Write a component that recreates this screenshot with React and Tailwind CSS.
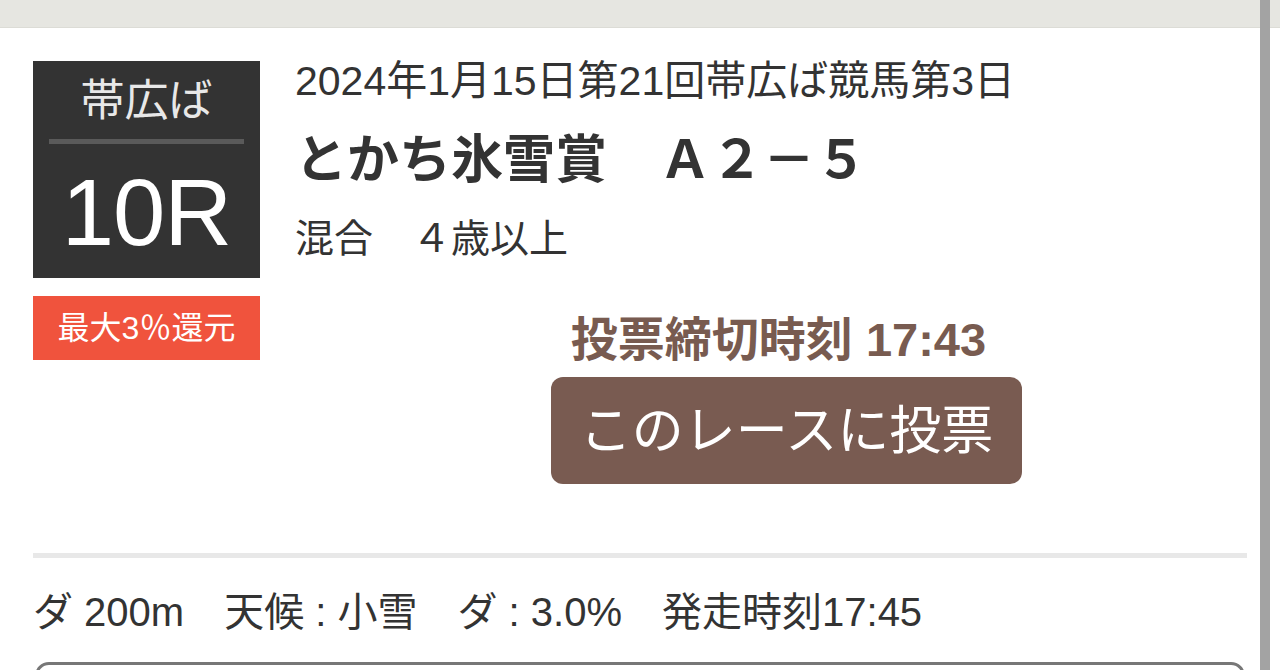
import React from "react";

const FONT = { fontFamily: '"Liberation Sans", "Noto Sans CJK JP", sans-serif' };

export default function App() {
  return (
    <div className="w-[1280px] h-[670px] overflow-hidden flex bg-white text-[#333]" style={FONT}>
      <div className="w-[1260px] flex flex-col">
        <div className="h-[28px] bg-[#e6e6e1] border-b border-[#dcdcd6] shrink-0" />
        <div className="pl-[33px] pr-[13px] flex flex-col">
          <div className="flex pt-[33px]">
            <div className="w-[227px] flex flex-col shrink-0">
              <div className="h-[217px] bg-[#333333] flex flex-col items-center">
                <div className="text-[44px] leading-none text-[#e8e8e8] mt-[18px]">帯広ば</div>
                <div className="w-[195px] h-[5px] bg-[#5a5a5a] mt-[16px]" />
                <div className="text-[94px] leading-none text-white mt-[22px] tracking-[-1px]">10R</div>
              </div>
              <div className="h-[64px] mt-[18px] bg-[#f0533d] flex items-center justify-center text-white text-[32px] leading-none">
                最大3％還元
              </div>
            </div>
            <div className="ml-[35px] flex flex-col flex-1">
              <div className="text-[41px] leading-none mt-[0px]">2024年1月15日第21回帯広ば競馬第3日</div>
              <div className="text-[52px] leading-none font-bold mt-[32px]">とかち氷雪賞　Ａ２－５</div>
              <div className="text-[39px] leading-none mt-[33px]">混合　４歳以上</div>
              <div className="ml-[256px] w-[471px] flex flex-col items-center mt-[58px]">
                <div className="text-[47px] leading-none font-bold text-[#785b50] pr-[16px]">投票締切時刻 17:43</div>
                <div className="mt-[14px] w-[471px] h-[107px] rounded-[12px] bg-[#795b51] flex items-center justify-center text-white text-[52px] leading-none">
                  このレースに投票
                </div>
              </div>
            </div>
          </div>
          <div className="h-[5px] bg-[#e8e8e8] mt-[69px]" />
          <div className="text-[40px] leading-none mt-[34px] whitespace-pre">ダ 200m　天候 : 小雪　ダ : 3.0%　発走時刻17:45</div>
          <div className="mt-[30px] ml-[2px] mr-[2px] h-[60px] border-[3px] border-[#777] rounded-[14px]" />
        </div>
      </div>
      <div className="w-[10px] bg-[#a3a3a3] shrink-0" />
      <div className="w-[10px] flex flex-col">
        <div className="h-[28px] bg-[#e6e6e1] border-b border-[#dcdcd6]" />
      </div>
    </div>
  );
}
